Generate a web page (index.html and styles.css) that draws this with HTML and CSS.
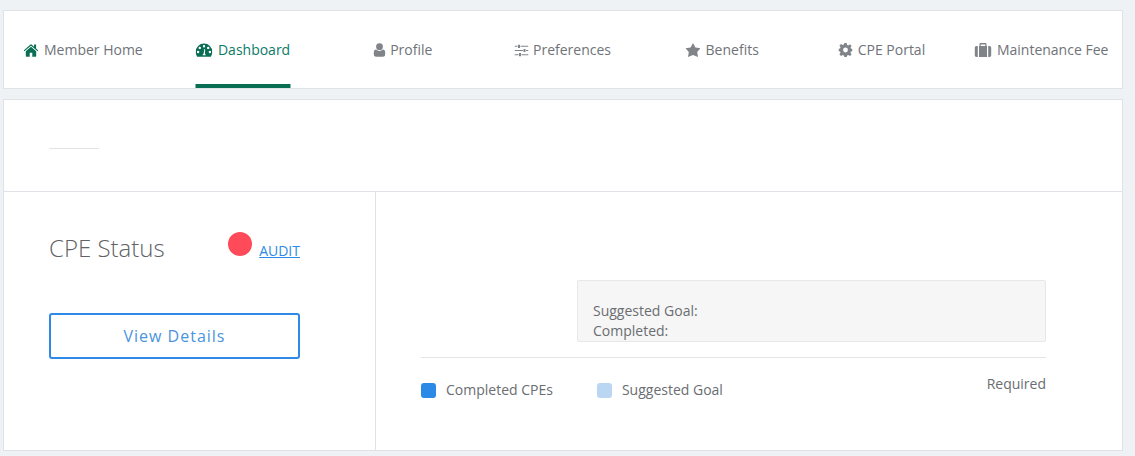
FILE: index.html
```html
<!DOCTYPE html>
<html lang="en">
<head>
    <meta charset="UTF-8">
    <title>CPE Dashboard</title>
    <link rel="stylesheet" href="styles.css">
</head>
<body>
    <nav class="top-nav">
        <a class="nav-item active" href="#">
            <svg class="nav-icon" width="15" height="13" viewBox="0 0 16 14"><path d="M8 3 2.400 7.700V13a.7.7 0 0 0 .7.700h3.500V9.500h2.800v4.200h3.500a.7.7 0 0 0 .7-.7V7.700z"/><path d="M15.900 6.900 13.500 4.800V.5h-2.200v2.500L8.900.7a1.400 1.400 0 0 0-1.800 0L.1 6.900l.7.900L8 1.900l7.200 5.900z"/></svg>
            Member Home
        </a>
        <a class="nav-item current" href="#">
            <svg class="nav-icon" width="17" height="14" viewBox="0 0 17 14"><path fill-rule="evenodd" d="M8.500.5A8.300 8.300 0 0 0 .2 8.800c0 1.700.5 3.300 1.300 4.600.1.200.3.300.5.300h13c.2 0 .4-.1.500-.3.800-1.300 1.300-2.900 1.300-4.600A8.300 8.300 0 0 0 8.500.5zM8.500 2a1.200 1.200 0 1 1 0 2.400 1.200 1.200 0 0 1 0-2.400zM4.300 3.700a1.200 1.200 0 1 1 0 2.400 1.200 1.200 0 0 1 0-2.400zM12.700 3.700a1.200 1.200 0 1 1 0 2.400 1.200 1.200 0 0 1 0-2.400zM2.600 7.800a1.200 1.200 0 1 1 0 2.400 1.200 1.200 0 0 1 0-2.400zM14.400 7.800a1.200 1.200 0 1 1 0 2.400 1.200 1.200 0 0 1 0-2.400zM7 12.300c0-.700.400-1.200 1-1.400l.900-4.800c.1-.3.700-.2.700.100l-.1 4.700c.5.300.8.800.8 1.400z"/></svg>
            Dashboard
        </a>
        <a class="nav-item" href="#">
            <svg class="nav-icon" width="12" height="14" viewBox="0 0 12 14"><circle cx="6" cy="3.700" r="3.400"/><path d="M2.600 6.600C3.500 7.400 4.700 7.900 6 7.900s2.500-.5 3.400-1.300c1.600.2 2.500 1.500 2.500 3.800 0 2-1 3.300-2.500 3.300H2.600C1.100 13.700.1 12.400.1 10.400c0-2.300.9-3.600 2.500-3.800z"/></svg>
            Profile
        </a>
        <a class="nav-item" href="#">
            <svg class="nav-icon" width="14" height="13" viewBox="0 0 14 13"><path d="M0 1.800h3v1H0zM6 1.800h8v1H6zM0 6h8.500v1H0zM11.500 6H14v1h-2.500zM0 10.200h4v1H0zM7 10.200h7v1H7z"/><path d="M3.500.7h2v3.200h-2zM9 4.900h2v3.200H9zM4.500 9.100h2v3.200h-2z"/></svg>
            Preferences
        </a>
        <a class="nav-item" href="#">
            <svg class="nav-icon" width="15" height="14" viewBox="0 0 15 14"><path d="M7.500 0 9.900 4.500 15 5.300 11.700 9.100 12.500 14 7.500 11.900 2.500 14 3.300 9.100 0 5.300 5.100 4.500z"/></svg>
            Benefits
        </a>
        <a class="nav-item" href="#">
            <svg class="nav-icon" width="14" height="14" viewBox="0 0 14 14"><path fill-rule="evenodd" d="M5.800 0h2.400l.4 1.900 1.200.5L11.400 1.300l1.700 1.700-1.100 1.600.5 1.200L14 5.800v2.400l-1.500.4-.5 1.200 1.100 1.600-1.700 1.700-1.600-1.100-1.200.5L8.200 14H5.800l-.4-1.500-1.200-.5-1.600 1.100-1.700-1.700L2 9.800l-.5-1.200L0 8.200V5.800l1.500-.4.500-1.200L.9 2.600 2.600.9 4.200 2l1.200-.5zM7 4.600a2.400 2.400 0 1 0 0 4.800 2.400 2.400 0 0 0 0-4.800z"/></svg>
            CPE Portal
        </a>
        <a class="nav-item" href="#">
            <svg class="nav-icon" width="17" height="14" viewBox="0 0 17 14"><path fill-rule="evenodd" d="M5 3V1.200C5 .6 5.500.1 6.100.1h4.800c.6 0 1.100.5 1.100 1.100V3h.5v11h-8V3zM6.200 3h4.600V1.400H6.200z"/><path d="M3.300 3v11H2.200C1 14 .1 13.100.1 12V5C.1 3.900 1 3 2.200 3zM13.700 3h1.100c1.200 0 2.100.9 2.100 2v7c0 1.100-.9 2-2.100 2h-1.100z"/></svg>
            Maintenance Fee
        </a>
    </nav>

    <section class="card">
        <div class="card-head">
            <div class="short-rule"></div>
        </div>
        <div class="card-body">
            <div class="status-col">
                <div class="status-row">
                    <h2 class="status-title">CPE Status</h2>
                    <div class="status-flag">
                        <span class="red-dot"></span>
                        <a class="audit-link" href="#">AUDIT</a>
                    </div>
                </div>
                <button class="details-btn" type="button">View Details</button>
            </div>
            <div class="chart-col">
                <div class="goal-box">
                    <div>Suggested Goal:</div>
                    <div>Completed:</div>
                </div>
                <div class="legend">
                    <span class="legend-item"><i class="swatch swatch-done"></i>Completed CPEs</span>
                    <span class="legend-item"><i class="swatch swatch-goal"></i>Suggested Goal</span>
                    <span class="required">Required</span>
                </div>
            </div>
        </div>
    </section>
</body>
</html>
```

FILE: styles.css
```css
* {
    box-sizing: border-box;
}
body {
    margin: 0;
    padding: 10px 12px 0 3px;
    background: #eef2f5;
    font-family: "Open Sans", sans-serif;
    font-size: 14px;
    line-height: 20px;
    color: #6a6d71;
}
.top-nav {
    display: grid;
    grid-template-columns: repeat(7, 1fr);
    height: 79px;
    background: #fff;
    border: 1px solid #dfe3e7;
}
.nav-item {
    justify-self: center;
    display: flex;
    align-items: center;
    gap: 5px;
    padding-top: 5px;
    border-bottom: 4px solid transparent;
    color: #6f7378;
    text-decoration: none;
    white-space: nowrap;
    transform: translateX(-0.5px);
}
.nav-icon {
    fill: #808489;
    flex: none;
}
.active .nav-icon,
.current .nav-icon {
    fill: #0a6e55;
}
.current {
    color: #0b7a68;
    border-bottom-color: #0a6e55;
}
.card {
    margin-top: 10px;
    height: 352px;
    background: #fff;
    border: 1px solid #dfe3e7;
}
.card-head {
    height: 92px;
    padding: 48px 45px 0;
    border-bottom: 1px solid #dfe3e7;
}
.short-rule {
    width: 50px;
    border-top: 1px solid #e2e4e6;
}
.card-body {
    display: flex;
    height: 258px;
}
.status-col {
    width: 372px;
    padding: 40px 75px 0 45px;
    border-right: 1px solid #dfe3e7;
}
.status-row {
    display: flex;
    justify-content: space-between;
    height: 81px;
}
.status-title {
    margin: -1px 0 0;
    font-size: 24px;
    font-weight: 300;
    line-height: 34px;
    color: #5f6266;
}
.status-flag {
    display: flex;
}
.red-dot {
    width: 24px;
    height: 24px;
    border-radius: 50%;
    background: #ff4a5a;
}
.audit-link {
    margin: 9px 0 0 7px;
    font-size: 14px;
    line-height: 20px;
    color: #2e8ae6;
}
.details-btn {
    display: block;
    width: 100%;
    height: 46px;
    background: #fff;
    border: 2px solid #2e8ae6;
    border-radius: 3px;
    font-family: inherit;
    font-size: 16px;
    letter-spacing: 1px;
    color: #4a94e0;
}
.chart-col {
    flex: 1;
    padding: 88px 76px 0 45px;
}
.goal-box {
    width: 469px;
    height: 62px;
    margin: 0 0 15px auto;
    padding: 20px 15px 0;
    background: #f6f6f6;
    border: 1px solid #e8e8e8;
    border-radius: 2px;
    overflow: hidden;
}
.legend {
    display: flex;
    height: 60px;
    border-top: 1px solid #e2e4e6;
}
.legend-item {
    display: flex;
    align-items: center;
    height: 20px;
    margin: 22px 44px 0 0;
}
.swatch {
    width: 15px;
    height: 15px;
    margin-right: 10px;
    border-radius: 3px;
}
.swatch-done {
    background: #2b8ae6;
}
.swatch-goal {
    background: #bbd6f3;
}
.required {
    margin: 16px 0 0 auto;
}
```
